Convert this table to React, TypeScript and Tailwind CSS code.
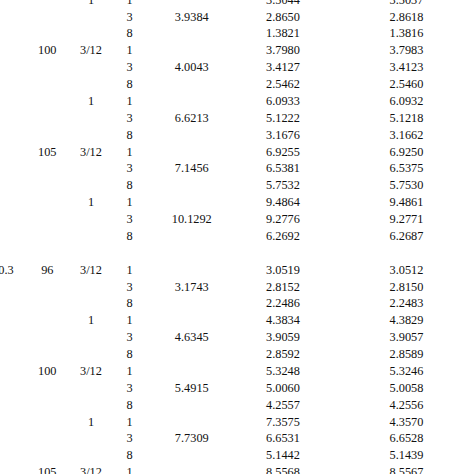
export default function App() {
  const rows: string[][] = [
    ["", "", "1", "1", "", "3.5044", "3.5037"],
    ["", "", "", "3", "3.9384", "2.8650", "2.8618"],
    ["", "", "", "8", "", "1.3821", "1.3816"],
    ["", "100", "3/12", "1", "", "3.7980", "3.7983"],
    ["", "", "", "3", "4.0043", "3.4127", "3.4123"],
    ["", "", "", "8", "", "2.5462", "2.5460"],
    ["", "", "1", "1", "", "6.0933", "6.0932"],
    ["", "", "", "3", "6.6213", "5.1222", "5.1218"],
    ["", "", "", "8", "", "3.1676", "3.1662"],
    ["", "105", "3/12", "1", "", "6.9255", "6.9250"],
    ["", "", "", "3", "7.1456", "6.5381", "6.5375"],
    ["", "", "", "8", "", "5.7532", "5.7530"],
    ["", "", "1", "1", "", "9.4864", "9.4861"],
    ["", "", "", "3", "10.1292", "9.2776", "9.2771"],
    ["", "", "", "8", "", "6.2692", "6.2687"],
    ["", "", "", "", "", "", ""],
    ["0.3", "96", "3/12", "1", "", "3.0519", "3.0512"],
    ["", "", "", "3", "3.1743", "2.8152", "2.8150"],
    ["", "", "", "8", "", "2.2486", "2.2483"],
    ["", "", "1", "1", "", "4.3834", "4.3829"],
    ["", "", "", "3", "4.6345", "3.9059", "3.9057"],
    ["", "", "", "8", "", "2.8592", "2.8589"],
    ["", "100", "3/12", "1", "", "5.3248", "5.3246"],
    ["", "", "", "3", "5.4915", "5.0060", "5.0058"],
    ["", "", "", "8", "", "4.2557", "4.2556"],
    ["", "", "1", "1", "", "7.3575", "4.3570"],
    ["", "", "", "3", "7.7309", "6.6531", "6.6528"],
    ["", "", "", "8", "", "5.1442", "5.1439"],
    ["", "105", "3/12", "1", "", "8.5568", "8.5567"],
  ]

  return (
    <div className="h-[474px] w-[474px] overflow-hidden bg-white font-['Liberation_Serif',serif] text-[12.3px] text-[#111]">
      <div className="-ml-[10px] -mt-[8.6px] grid grid-cols-[32px_50.6px_36.8px_40.2px_84.4px_98px_149px]">
        {rows.map((r, i) => (
          <div key={i} className="contents">
            {r.map((c, j) => (
              <div key={j} className="flex h-[16.89px] items-center justify-center leading-none">
                {c}
              </div>
            ))}
          </div>
        ))}
      </div>
    </div>
  )
}
